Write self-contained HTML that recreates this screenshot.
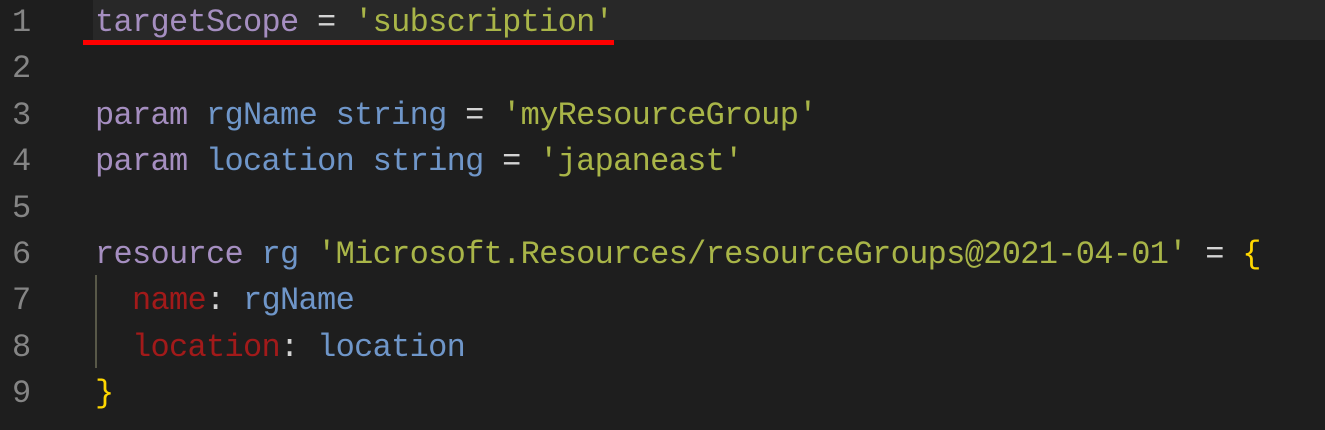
<!DOCTYPE html>
<html><head><style>
html,body{margin:0;padding:0;background:#1e1e1e;width:1325px;height:430px;overflow:hidden;position:relative}
.l{position:absolute;left:0;height:46px;line-height:46px;font-family:"Liberation Mono",monospace;font-size:32px;letter-spacing:-0.7px;white-space:pre;color:#d4d4d4}
.n{position:absolute;left:12px;color:#858585}
.c{position:absolute;left:95px}
.k{color:#a58ec0}.v{color:#6f96c9}.s{color:#a9b548}.p{color:#a21a1a}.b{color:#ffd700}
</style></head><body>
<div style="position:absolute;left:93px;top:0;width:1232px;height:40px;background:#282828"></div>
<div style="position:absolute;left:83px;top:40px;width:531px;height:5px;background:#f00"></div>
<div style="position:absolute;left:95px;top:275px;width:2px;height:93px;background:#585848"></div>
<div class="l" style="top:0px"><span class="n">1</span><span class="c"><span class="k">targetScope</span> = <span class="s">'subscription'</span></span></div>
<div class="l" style="top:46.4px"><span class="n">2</span></div>
<div class="l" style="top:92.8px"><span class="n">3</span><span class="c"><span class="k">param</span> <span class="v">rgName</span> <span class="v">string</span> = <span class="s">'myResourceGroup'</span></span></div>
<div class="l" style="top:139.2px"><span class="n">4</span><span class="c"><span class="k">param</span> <span class="v">location</span> <span class="v">string</span> = <span class="s">'japaneast'</span></span></div>
<div class="l" style="top:185.6px"><span class="n">5</span></div>
<div class="l" style="top:232px"><span class="n">6</span><span class="c"><span class="k">resource</span> <span class="v">rg</span> <span class="s">'Microsoft.Resources/resourceGroups@2021-04-01'</span> = <span class="b">{</span></span></div>
<div class="l" style="top:278.4px"><span class="n">7</span><span class="c">  <span class="p">name</span>: <span class="v">rgName</span></span></div>
<div class="l" style="top:324.8px"><span class="n">8</span><span class="c">  <span class="p">location</span>: <span class="v">location</span></span></div>
<div class="l" style="top:371.2px"><span class="n">9</span><span class="c"><span class="b">}</span></span></div>
</body></html>
